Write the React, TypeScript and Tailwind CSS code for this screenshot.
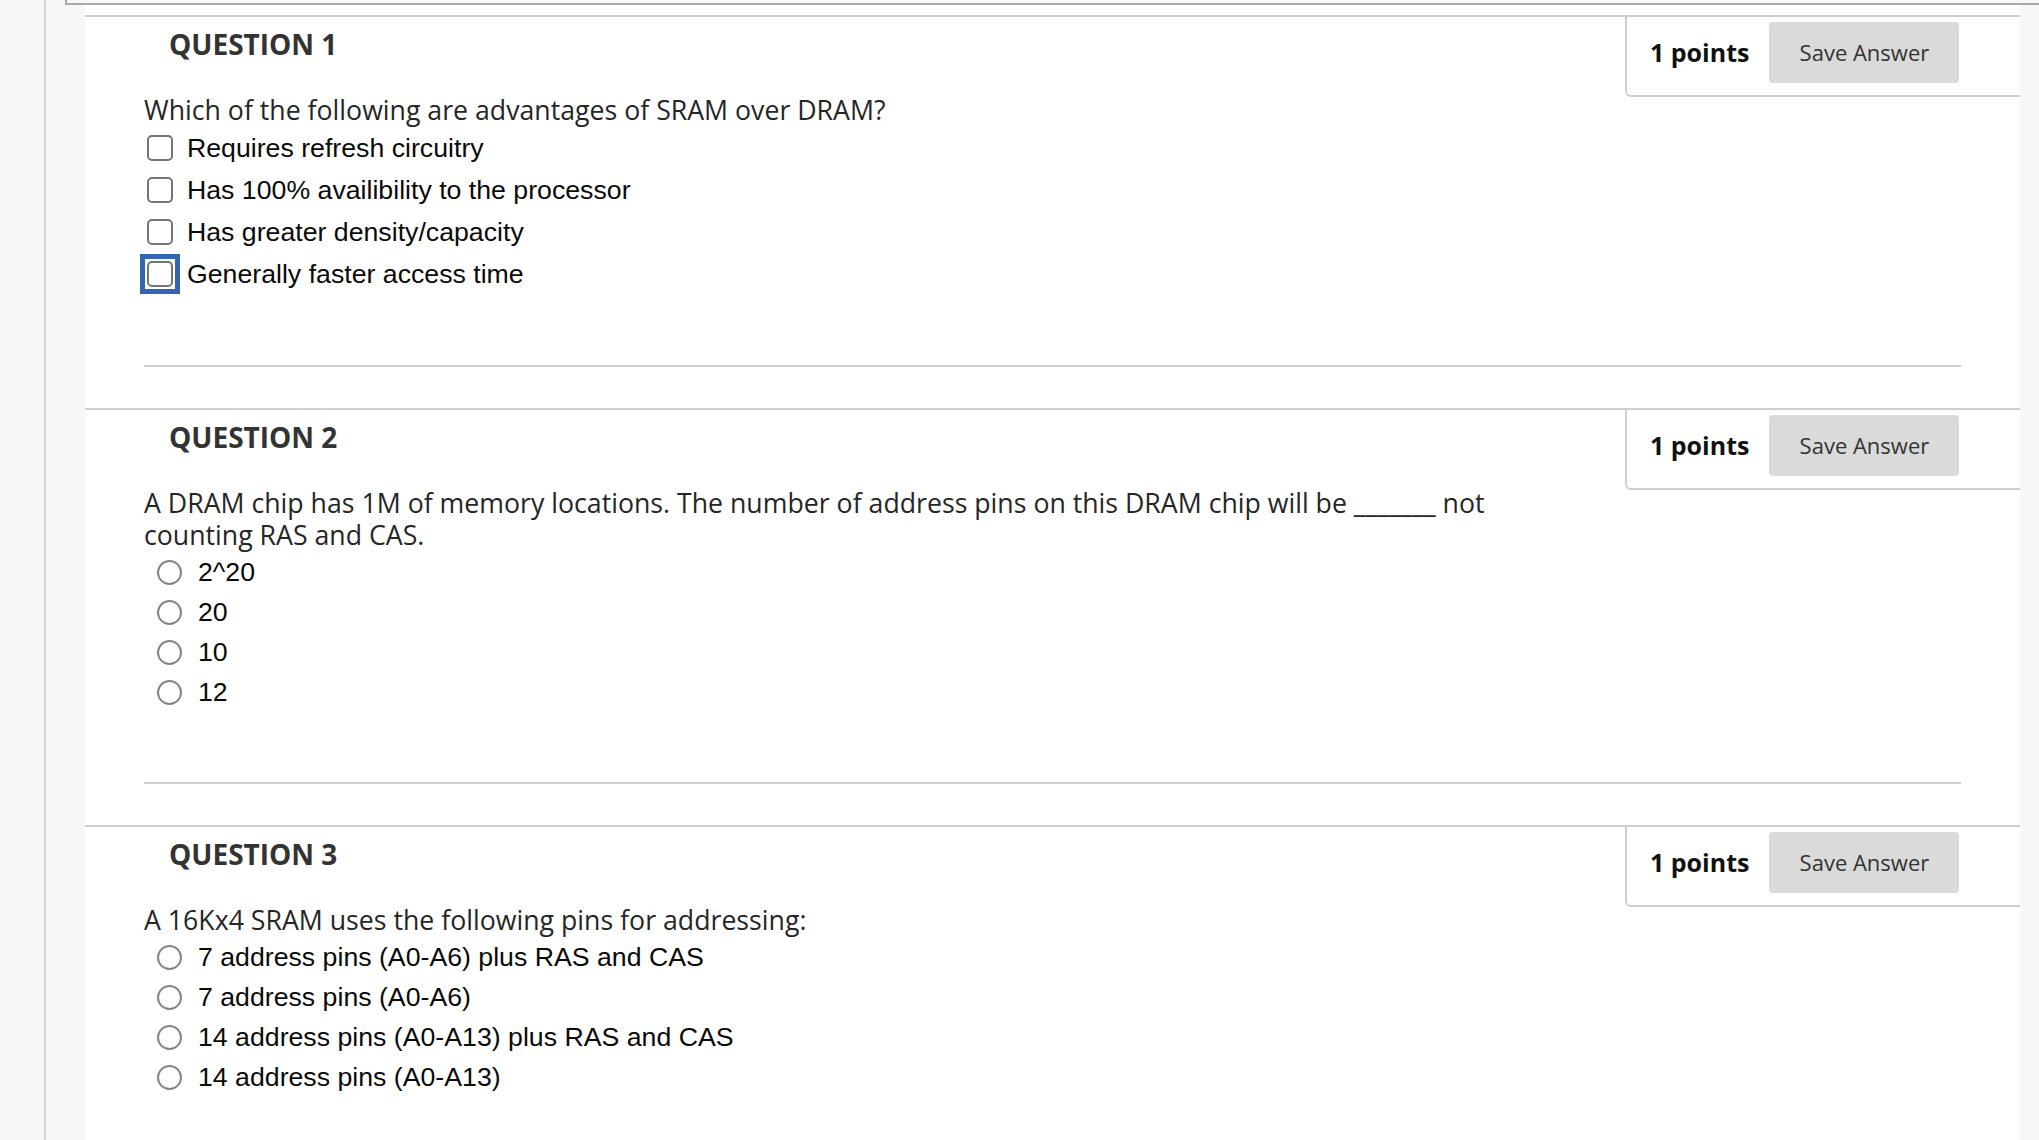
import React from "react";

type Question = {
  n: number;
  text: string;
  kind: "check" | "radio";
  options: string[];
  focused?: number;
};

const questions: Question[] = [
  {
    n: 1,
    text: "Which of the following are advantages of SRAM over DRAM?",
    kind: "check",
    options: [
      "Requires refresh circuitry",
      "Has 100% availibility to the processor",
      "Has greater density/capacity",
      "Generally faster access time",
    ],
    focused: 3,
  },
  {
    n: 2,
    text: "A DRAM chip has 1M of memory locations. The number of address pins on this DRAM chip will be _______ not counting RAS and CAS.",
    kind: "radio",
    options: ["2^20", "20", "10", "12"],
  },
  {
    n: 3,
    text: "A 16Kx4 SRAM uses the following pins for addressing:",
    kind: "radio",
    options: [
      "7 address pins (A0-A6) plus RAS and CAS",
      "7 address pins (A0-A6)",
      "14 address pins (A0-A13) plus RAS and CAS",
      "14 address pins (A0-A13)",
    ],
  },
];

const openSans = { fontFamily: '"Open Sans", "Noto Sans", sans-serif' };
const helv = { fontFamily: '"Liberation Sans", Arial, sans-serif' };

function Option({ kind, label, focused }: { kind: "check" | "radio"; label: string; focused?: boolean }) {
  if (kind === "check") {
    return (
      <li className="flex items-center h-[42px]">
        <span className="relative ml-[3px] w-[26px] h-[26px] shrink-0 rounded-[5px] border-2 border-[#767676] bg-white">
          {/* anel de foco */}
          {focused && <span className="absolute -inset-[9px] border-[5px] border-[#3465b0]" />}
        </span>
        <span className="ml-[14px] text-[26.7px] text-[#0a0a0a]" style={helv}>
          {label}
        </span>
      </li>
    );
  }
  return (
    <li className="flex items-center h-[40px]">
      <span className="ml-[13px] w-[25px] h-[25px] shrink-0 rounded-full border-2 border-[#858585] bg-white" />
      <span className="ml-[16px] text-[26.7px] text-[#0a0a0a]" style={helv}>
        {label}
      </span>
    </li>
  );
}

function QuestionBlock({ q }: { q: Question }) {
  return (
    <section className="border-t-2 border-[#cfcfcf]">
      <div className="flex items-start">
        <div className="flex-1 pl-[59px] pr-[40px]">
          {/* titulo da questão */}
          <h2 className="ml-[25px] mt-[10px] text-[28px] leading-[34px] font-bold text-[#333]" style={openSans}>
            QUESTION {q.n}
          </h2>
          <p className="mt-[33px] text-[26.7px] leading-[32px] text-[#262626] max-w-[1400px]" style={openSans}>
            {q.text}
          </p>
          <ul className="mt-[1px]">
            {q.options.map((o, i) => (
              <Option key={o} kind={q.kind} label={o} focused={q.focused === i} />
            ))}
          </ul>
        </div>

        {/* caixa de pontos */}
        <div className="w-[395px] h-[80px] shrink-0 border-l-2 border-b-2 border-[#cfcfcf] rounded-bl-[6px] pt-[5px] pl-[23px]">
          <div className="flex items-center h-[61px]">
            <span className="text-[25px] font-bold text-[#111]" style={openSans}>
              1 points
            </span>
            <button
              className="ml-[20px] w-[190px] h-[61px] rounded-[4px] bg-[#dadada] text-[22px] text-[#333]"
              style={openSans}
            >
              Save Answer
            </button>
          </div>
        </div>
      </div>
      <div className="mx-[59px] h-[72px] border-b-2 border-[#cfcfcf]" />
    </section>
  );
}

export default function App() {
  return (
    <div className="flex min-h-screen bg-[#f7f7f7]">
      <div className="w-[46px] shrink-0 border-r-2 border-[#d3d3d3]" />

      <div className="flex-1 flex flex-col">
        <div className="ml-[19px] h-[5px] border-l-2 border-b-2 border-[#a9a9a9]" />

        <main className="ml-[39px] mr-[19px] flex-1 bg-white pt-[10px]">
          <div className="flex flex-col gap-[41px]">
            {questions.map((q) => (
              <QuestionBlock key={q.n} q={q} />
            ))}
          </div>
        </main>
      </div>
    </div>
  );
}
